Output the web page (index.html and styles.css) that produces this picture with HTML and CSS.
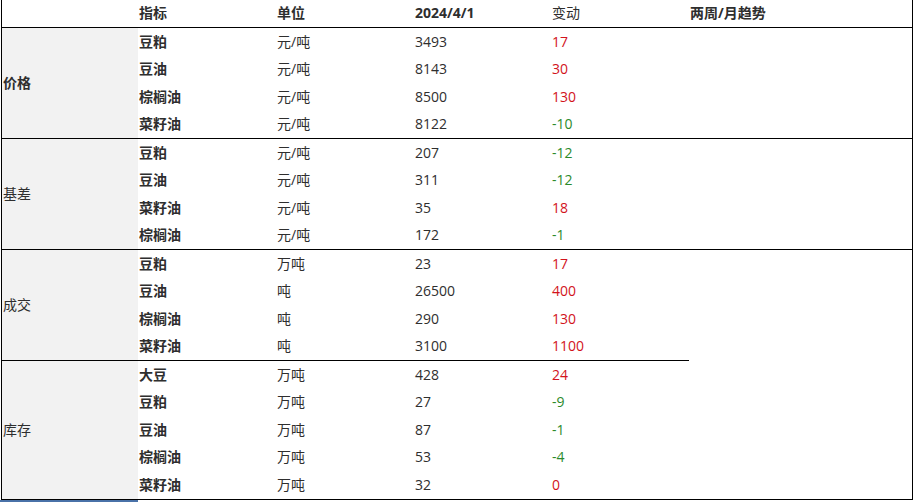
FILE: index.html
```html
<!DOCTYPE html>
<html lang="zh">
<head>
<meta charset="utf-8">
<link rel="stylesheet" href="styles.css">
</head>
<body>
<div class="wrap">
<table class="tbl">
  <colgroup>
    <col class="c1"><col class="c2"><col class="c3"><col class="c4"><col class="c5"><col class="c6">
  </colgroup>
  <tr class="head">
    <td class="cat-h"></td>
    <td class="b">指标</td>
    <td class="b">单位</td>
    <td class="b">2024/4/1</td>
    <td>变动</td>
    <td class="b">两周/月趋势</td>
  </tr>

  <tr class="r28">
    <td class="cat b end" rowspan="4">价格</td>
    <td class="name">豆粕</td><td>元/吨</td><td>3493</td><td class="up">17</td>
    <td class="trend end" rowspan="4"></td>
  </tr>
  <tr class="r27"><td class="name">豆油</td><td>元/吨</td><td>8143</td><td class="up">30</td></tr>
  <tr class="r28"><td class="name">棕榈油</td><td>元/吨</td><td>8500</td><td class="up">130</td></tr>
  <tr class="r28 last"><td class="name end">菜籽油</td><td class="end">元/吨</td><td class="end">8122</td><td class="down end">-10</td></tr>

  <tr class="r28">
    <td class="cat end" rowspan="4">基差</td>
    <td class="name">豆粕</td><td>元/吨</td><td>207</td><td class="down">-12</td>
    <td class="trend end" rowspan="4"></td>
  </tr>
  <tr class="r27"><td class="name">豆油</td><td>元/吨</td><td>311</td><td class="down">-12</td></tr>
  <tr class="r28"><td class="name">菜籽油</td><td>元/吨</td><td>35</td><td class="up">18</td></tr>
  <tr class="r28 last"><td class="name end">棕榈油</td><td class="end">元/吨</td><td class="end">172</td><td class="down end">-1</td></tr>

  <tr class="r28">
    <td class="cat end" rowspan="4">成交</td>
    <td class="name">豆粕</td><td>万吨</td><td>23</td><td class="up">17</td>
    <td class="trend end" rowspan="9"></td>
  </tr>
  <tr class="r27"><td class="name">豆油</td><td>吨</td><td>26500</td><td class="up">400</td></tr>
  <tr class="r28"><td class="name">棕榈油</td><td>吨</td><td>290</td><td class="up">130</td></tr>
  <tr class="r28 last"><td class="name end">菜籽油</td><td class="end">吨</td><td class="end">3100</td><td class="up end">1100</td></tr>

  <tr class="r28">
    <td class="cat end" rowspan="5">库存</td>
    <td class="name">大豆</td><td>万吨</td><td>428</td><td class="up">24</td>
  </tr>
  <tr class="r27"><td class="name">豆粕</td><td>万吨</td><td>27</td><td class="down">-9</td></tr>
  <tr class="r28"><td class="name">豆油</td><td>万吨</td><td>87</td><td class="down">-1</td></tr>
  <tr class="r27"><td class="name">棕榈油</td><td>万吨</td><td>53</td><td class="down">-4</td></tr>
  <tr class="r29 last"><td class="name end">菜籽油</td><td class="end">万吨</td><td class="end">32</td><td class="up end">0</td></tr>
</table>
<div class="next"><div class="next-cell"></div></div>
</div>
</body>
</html>
```

FILE: styles.css
```css
html, body {
  margin: 0;
  padding: 0;
  background: #fff;
}
body {
  font-family: "Open Sans", "Noto Sans CJK SC", sans-serif;
  font-size: 14px;
  color: #2e2e2e;
}
.wrap {
  padding-left: 1px;
  width: 912px;
}
.tbl {
  table-layout: fixed;
  border-collapse: separate;
  border-spacing: 0;
  width: 912px;
  border-left: 1px solid #000;
  border-right: 1px solid #000;
}
.c1 { width: 136px; }
.c2 { width: 138px; }
.c3 { width: 138px; }
.c4 { width: 137px; }
.c5 { width: 138px; }
.c6 { width: 223px; }
.tbl td {
  padding: 0 0 1px 1px;
  line-height: 16px;
  vertical-align: middle;
  white-space: nowrap;
  overflow: hidden;
}
.head { height: 28px; }
.head td { border-bottom: 1px solid #000; padding-bottom: 2px; }
.r27 { height: 27px; }
.r28 { height: 28px; }
.r29 { height: 29px; }
.b { font-weight: 700; }
.name { font-weight: 700; }
.cat { background: #f2f2f2; }
.end { border-bottom: 1px solid #000; }
.up { color: #d2131c; }
.down { color: #2b8a2b; }
.next {
  margin-left: -1px;
  height: 2px;
  display: flex;
}
.next-cell {
  width: 138px;
  background: #4a72a8;
}
```
